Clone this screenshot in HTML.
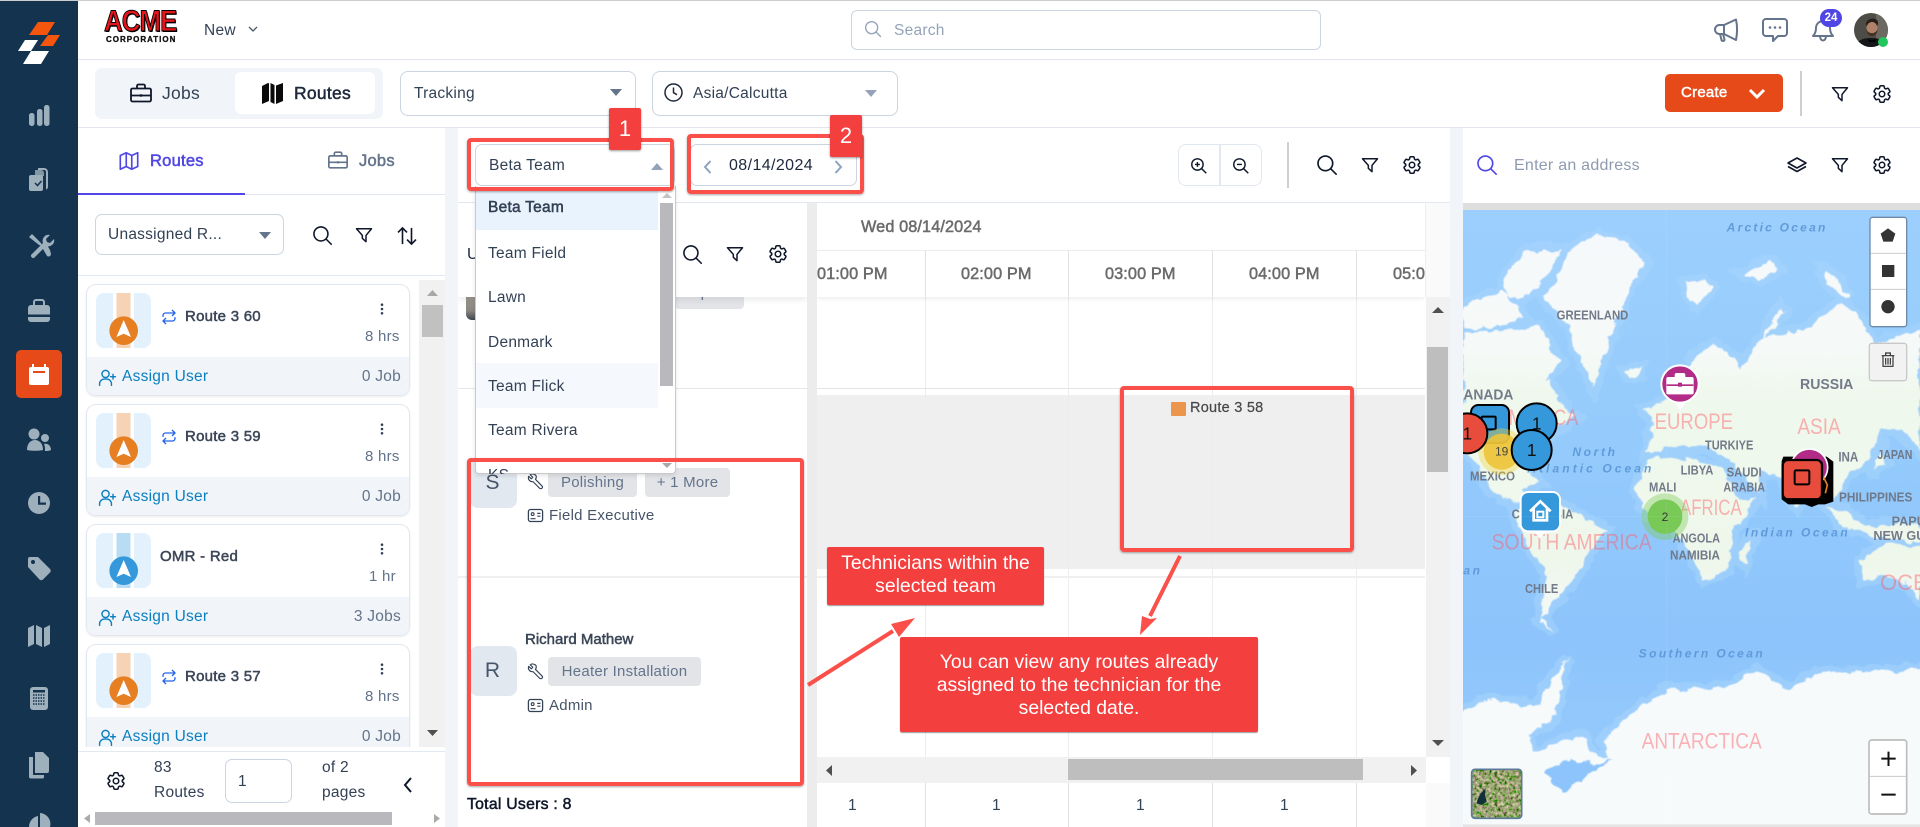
<!DOCTYPE html>
<html lang="en"><head><meta charset="utf-8"><title>Schedule</title>
<style>
*{box-sizing:border-box}
html,body{margin:0;padding:0;width:1920px;height:827px;overflow:hidden;background:#fff;font-family:"Liberation Sans",sans-serif;color:#334155}
.a{position:absolute}
.t{position:absolute;white-space:nowrap;line-height:20px;height:20px;letter-spacing:.25px;transform:translateY(1px)}
.t2{transform:translateY(2px)}
.m{font-weight:400;-webkit-text-stroke:.5px currentColor}
.ln{position:absolute;background:#e2e8f0}
svg.i{position:absolute;overflow:visible}
.card{position:absolute;left:86px;width:324px;height:112px;background:#fff;border:1px solid #e2e8f0;border-radius:10px;box-shadow:0 1px 2px rgba(0,0,0,.08);overflow:hidden}
.card .bar{position:absolute;left:0;right:0;top:72px;height:40px;background:#f1f4f9}
.name{font-size:15px;color:#3b4657}
.sb{fill:#9fb0bd}
.chip{position:absolute;background:#e2e4e8;border-radius:4px;height:29px;line-height:30px;font-size:15px;color:#64748b;text-align:center;letter-spacing:.25px;white-space:nowrap}
.dd{position:absolute;left:488px;font-size:15.5px;color:#334155;line-height:20px;white-space:nowrap;letter-spacing:.25px;transform:translateY(1px)}
.rr{position:absolute;border:4px solid #fb4f49;border-radius:4px;box-shadow:0 1px 2px rgba(0,0,0,.35);z-index:20}
.bd{position:absolute;background:#f43f3f;border-radius:2px;box-shadow:0 1px 2px rgba(0,0,0,.4);color:#fff;font-size:22px;text-align:center;line-height:42px;width:32px;height:42px;z-index:21}
.call{position:absolute;background:#f43f3f;border-radius:2px;box-shadow:0 1px 1px rgba(0,0,0,.4);color:#fff;font-size:19.4px;line-height:23px;text-align:center;z-index:21;white-space:nowrap}
</style></head>
<body>
<svg width="0" height="0" style="position:absolute">
<defs>
<symbol id="gear" viewBox="0 0 24 24"><path fill="none" stroke="currentColor" stroke-width="1.7" stroke-linejoin="round" d="M9.594 3.94c.09-.542.56-.94 1.11-.94h2.593c.55 0 1.02.398 1.11.94l.213 1.281c.063.374.313.686.645.87.074.04.147.083.22.127.325.196.72.257 1.075.124l1.217-.456a1.125 1.125 0 0 1 1.37.49l1.296 2.247a1.125 1.125 0 0 1-.26 1.431l-1.003.827c-.293.241-.438.613-.43.992a7.723 7.723 0 0 1 0 .255c-.008.378.137.75.43.991l1.004.827c.424.35.534.955.26 1.43l-1.298 2.247a1.125 1.125 0 0 1-1.369.491l-1.217-.456c-.355-.133-.75-.072-1.076.124a6.47 6.47 0 0 1-.22.128c-.331.183-.581.495-.644.869l-.213 1.281c-.09.543-.56.94-1.11.94h-2.594c-.55 0-1.019-.398-1.11-.94l-.213-1.281c-.062-.374-.312-.686-.644-.87a6.52 6.52 0 0 1-.22-.127c-.325-.196-.72-.257-1.076-.124l-1.217.456a1.125 1.125 0 0 1-1.369-.49l-1.297-2.247a1.125 1.125 0 0 1 .26-1.431l1.004-.827c.292-.24.437-.613.43-.991a6.932 6.932 0 0 1 0-.255c.007-.38-.138-.751-.43-.992l-1.004-.827a1.125 1.125 0 0 1-.26-1.43l1.297-2.247a1.125 1.125 0 0 1 1.37-.491l1.216.456c.356.133.751.072 1.076-.124.072-.044.146-.086.22-.128.332-.183.582-.495.644-.869l.214-1.28Z"/><circle cx="12" cy="12" r="3" fill="none" stroke="currentColor" stroke-width="1.7"/></symbol>
<symbol id="filter" viewBox="0 0 24 24"><path fill="none" stroke="currentColor" stroke-width="1.8" stroke-linejoin="round" d="M3 4.5h18l-6.600 8v7.500l-4.400-4v-3.500z"/></symbol>
<symbol id="search" viewBox="0 0 24 24"><circle cx="10.200" cy="10.200" r="8" fill="none" stroke="currentColor" stroke-width="1.8"/><path d="M16 16l6 6" stroke="currentColor" stroke-width="1.800" fill="none" stroke-linecap="round"/></symbol>
<symbol id="brief" viewBox="0 0 24 24"><path fill="none" stroke="currentColor" stroke-width="1.800" stroke-linejoin="round" d="M3.500 7.500h17a1.500 1.500 0 0 1 1.500 1.500v10a1.500 1.500 0 0 1-1.500 1.500h-17A1.500 1.500 0 0 1 2 19V9a1.500 1.500 0 0 1 1.500-1.500zM8 7.500V5a1.500 1.500 0 0 1 1.500-1.500h5A1.500 1.500 0 0 1 16 5v2.500M2 14.500h20"/><rect x="10.800" y="13.300" width="2.400" height="2.400" fill="currentColor"/></symbol>
<symbol id="map" viewBox="0 0 24 24"><path fill="none" stroke="currentColor" stroke-width="1.800" stroke-linejoin="round" d="M2.500 6l6.500-3 6 3 6.500-3v15l-6.500 3-6-3-6.500 3zM9 3v15M15 6v15"/></symbol>
<symbol id="wrench" viewBox="0 0 24 24"><path fill="none" stroke="#334155" stroke-width="1.600" stroke-linejoin="round" d="M11 2.500a5.500 5.500 0 0 0-6.500 0l3.700 3.500-2.200 2.300L2.400 4.700a5.500 5.500 0 0 0 6.100 7.500l9.300 9.300c1 .9 2.500.9 3.300 0 .9-.9.9-2.300 0-3.200l-9.200-9.400a5.500 5.500 0 0 0 .1-6.400z"/></symbol>
<symbol id="idc" viewBox="0 0 24 24"><rect x="2" y="3.500" width="20" height="17" rx="3" fill="none" stroke="#334155" stroke-width="1.800"/><circle cx="8" cy="10" r="2" fill="none" stroke="#334155" stroke-width="1.500"/><path d="M5 16.500h7M14.500 9h4.500M14.500 13h4.500" stroke="#334155" stroke-width="1.600" fill="none"/></symbol>
<symbol id="thO" viewBox="0 0 55 55"><rect width="55" height="55" rx="8" fill="#e3f1fc"/><rect x="17" width="21" height="55" fill="#fff"/><rect x="20.500" width="14" height="55" fill="#f6d3b5"/><circle cx="27.700" cy="37.700" r="14.300" fill="#e67e22"/><path d="M27.700 27l7.300 17-7.300-3.300-7.300 3.300z" fill="#fff"/></symbol>
<symbol id="thB" viewBox="0 0 55 55"><rect width="55" height="55" rx="8" fill="#e3f1fc"/><rect x="17" width="21" height="55" fill="#fff"/><rect x="20.500" width="14" height="55" fill="#b7dcf3"/><circle cx="27.700" cy="37.700" r="14.300" fill="#3498db"/><path d="M27.700 27l7.300 17-7.300-3.300-7.300 3.300z" fill="#fff"/></symbol>
<symbol id="rep" viewBox="0 0 24 24"><path fill="none" stroke="#2563eb" stroke-width="2" stroke-linecap="round" stroke-linejoin="round" d="M17 2l4 4-4 4M21 6H7a4 4 0 0 0-4 4v1M7 22l-4-4 4-4M3 18h14a4 4 0 0 0 4-4v-1"/></symbol>
<symbol id="usr" viewBox="0 0 24 24"><circle cx="9.500" cy="7.500" r="4.500" fill="none" stroke="#0b7fc0" stroke-width="1.800"/><path d="M2 22v-2a6 6 0 0 1 6-6h3a6 6 0 0 1 6 6v2M19 8v6M16 11h6" fill="none" stroke="#0b7fc0" stroke-width="1.800" stroke-linecap="round"/></symbol>
<symbol id="dots" viewBox="0 0 4 14"><circle cx="2" cy="2" r="1.500" fill="#334155"/><circle cx="2" cy="7" r="1.500" fill="#334155"/><circle cx="2" cy="12" r="1.500" fill="#334155"/></symbol>
</defs></svg>

<!-- top hairline -->
<div class="a" style="left:0;top:0;width:1920px;height:1px;background:#ccc;z-index:50"></div>

<!-- sidebar -->
<div class="a" style="left:0;top:0;width:78px;height:827px;background:#13334e;overflow:hidden">
<svg class="i" style="left:0;top:0" width="78" height="827">
<path d="M29 35l9-13h17l-8 13z" fill="#f4560d"/><path d="M40 46l8-11h12l-7 11z" fill="#f4560d"/>
<path d="M18 51l7-11h13l-7 11z" fill="#fff"/><path d="M23 64l8-13h18l-8 13z" fill="#fff"/>
<g class="sb">
<rect x="29" y="113" width="5.500" height="13" rx="2.500"/><rect x="37" y="109" width="5.500" height="17" rx="2.500"/><rect x="44" y="105" width="5.500" height="21" rx="2.500"/>
<path d="M38 168h6a4 4 0 0 1 4 4v15a3 3 0 0 1-2 2.500V172a2 2 0 0 0-2-2h-6z"/><path d="M35 170h6a3 3 0 0 1 3 3v3h-9z" opacity=".8"/><rect x="29" y="175" width="14" height="16" rx="2"/>
<path d="M29 237l3-3 9 9 1 3-3-1-10-8zM31 255l12-12a6 6 0 0 1 7-8l-4 4 1 3 3 1 4-4a6 6 0 0 1-8 7l-12 12a2.500 2.500 0 0 1-3-3zM43 249l4-4 3 5 1 4a2.500 2.500 0 0 1-4 2z"/>
<path d="M33 305v-3a3 3 0 0 1 3-3h6a3 3 0 0 1 3 3v3h-2v-3a1 1 0 0 0-1-1h-6a1 1 0 0 0-1 1v3z"/><path d="M31 305h16a3 3 0 0 1 3 3v7H28v-7a3 3 0 0 1 3-3z"/><path d="M28 317h22v2a3 3 0 0 1-3 3H31a3 3 0 0 1-3-3z"/>
<circle cx="34" cy="434" r="5.500"/><circle cx="45" cy="438" r="4"/><path d="M27 450c0-7 4-10 8-10s8 3 8 10c-5 1-11 1-16 0z"/><path d="M44 444c4-1 7 2 7 6-2 1-4 1-6 1 0-3 0-5-1-7z"/>
<circle cx="39" cy="503" r="11"/>
<path d="M28 559a2 2 0 0 1 2-2h8l12 12a2.500 2.500 0 0 1 0 3.500l-7 7a2.500 2.500 0 0 1-3.500 0L28 567z"/>
<path d="M28 628l6-3v19l-6 3zM36 625l6 3v19l-6-3zM44 628l6-3v19l-6 3z"/>
<rect x="30" y="687" width="18" height="23" rx="3"/>
<path d="M35 752h8l6 6v13a2 2 0 0 1-2 2H35zM29 757h4v18h11v2a1.500 1.500 0 0 1-1.500 1.500H31a2 2 0 0 1-2-2z"/>
<path d="M29 827a11 11 0 0 1 9-11v11zM40 813a11 11 0 0 1 10 14H40z"/>
</g>
<g fill="#13334e"><path d="M35 183l2.500 2.500 4-4.500" stroke="#13334e" stroke-width="1.500" fill="none"/><path d="M38 496h2.200v6.500H46v2.200h-8z"/><circle cx="33" cy="562" r="2"/><rect x="28" y="314.500" width="22" height="1.500"/><rect x="33" y="690" width="12" height="2.500"/>
<path d="M33 695h12M33 698h12M33 701h12M33 704h12" stroke="#13334e" stroke-width="1.500" stroke-dasharray="1.500 1"/></g>
<rect x="16" y="350" width="46" height="48" rx="5" fill="#e64a19"/>
<path d="M32 367v-3h2v3h10v-3h2v3h1a2 2 0 0 1 2 2v14a2 2 0 0 1-2 2H31a2 2 0 0 1-2-2v-14a2 2 0 0 1 2-2z" fill="#fff"/><rect x="33" y="371" width="12" height="2" fill="#e64a19"/>
</svg>
</div>

<!-- header -->
<div class="ln" style="left:78px;top:59px;width:1842px;height:1px;background:#e2e6ec"></div>
<div class="a" style="left:104px;top:6px;width:85px;font-weight:bold;font-size:30px;letter-spacing:-1px;color:#e8141c;line-height:32px;-webkit-text-stroke:1px #000;text-shadow:1px 1px 0 #000;transform:scaleX(.86);transform-origin:0 0;white-space:nowrap">ACME</div>
<div class="a" style="left:106px;top:35px;font-weight:bold;font-size:8px;letter-spacing:1px;-webkit-text-stroke:.3px #111;color:#111;line-height:10px;white-space:nowrap">CORPORATION</div>
<div class="t" style="left:204px;top:20px;font-size:15.500px;color:#334155">New</div>
<svg class="i" style="left:248px;top:26px" width="10" height="6"><path d="M1 1l4 4 4-4" fill="none" stroke="#475569" stroke-width="1.300"/></svg>
<div class="a" style="left:851px;top:10px;width:470px;height:40px;border:1px solid #cbd5e1;border-radius:6px"></div>
<svg class="i" style="left:864px;top:20px;color:#94a3b8" width="18" height="18"><use href="#search"/></svg>
<div class="t t2" style="left:894px;top:19px;font-size:15.500px;color:#94a3b8">Search</div>
<svg class="i" style="left:1714px;top:17px" width="26" height="26" viewBox="0 0 26 26"><path d="M10 8H5.500a4.500 4.500 0 0 0 0 9H10zM10 8l12-5.500c1.300 6 1.300 14 0 20.500L10 17M6 17l1.500 6c.5 1.500 3.500 1 3-.5L9 17" fill="none" stroke="#64748b" stroke-width="2" stroke-linejoin="round"/></svg>
<svg class="i" style="left:1761px;top:17px" width="28" height="26" viewBox="0 0 28 26"><path d="M5 2h18a3 3 0 0 1 3 3v11a3 3 0 0 1-3 3h-6l-5 5v-5H5a3 3 0 0 1-3-3V5a3 3 0 0 1 3-3z" fill="none" stroke="#64748b" stroke-width="2" stroke-linejoin="round"/><circle cx="9" cy="10.500" r="1.300" fill="#64748b"/><circle cx="14" cy="10.500" r="1.300" fill="#64748b"/><circle cx="19" cy="10.500" r="1.300" fill="#64748b"/></svg>
<svg class="i" style="left:1811px;top:17px" width="24" height="26" viewBox="0 0 24 26"><path d="M2 19c2-2 3-4 3-8a7 7 0 0 1 14 0c0 4 1 6 3 8zM9 19c0 6 6 6 6 0" fill="none" stroke="#64748b" stroke-width="2" stroke-linejoin="round"/></svg>
<div class="a" style="left:1820px;top:9px;width:22px;height:18px;border-radius:9px;background:#4f46e5;color:#fff;font-size:11.500px;font-weight:bold;text-align:center;line-height:18px">24</div>
<svg class="i" style="left:1854px;top:13px" width="34" height="34" viewBox="0 0 34 34"><defs><clipPath id="cav"><circle cx="17" cy="17" r="17"/></clipPath></defs><g clip-path="url(#cav)"><rect width="34" height="34" fill="#4e4c46"/><rect x="22" width="12" height="34" fill="#6b6961"/><path d="M2 34c1-7 7-9 15-9s14 2 15 9z" fill="#14161a"/><ellipse cx="18" cy="14.500" rx="5.500" ry="7.500" fill="#b08068"/><path d="M12 12c-1-7 12-9 12-2 0 2-.5 2-1 3-1-3-3-4-5-4s-4 1-5 4z" fill="#2a1e18"/><path d="M12.500 16c1 5 9 6 11 0 0 4-2 7-5.500 7s-5.500-3-5.500-7z" fill="#43301f"/><path d="M14 26l4 1.500 4-1.500-1 3h-6z" fill="#000"/></g></svg>
<div class="a" style="left:1878px;top:37px;width:10px;height:10px;border-radius:50%;background:#22c55e"></div>

<!-- sub-header -->
<div class="ln" style="left:78px;top:127px;width:1842px;height:1px;background:#e2e6ec"></div>
<div class="a" style="left:95px;top:68px;width:288px;height:51px;background:#f1f4f9;border-radius:7px"></div>
<div class="a" style="left:235px;top:72px;width:140px;height:42px;background:#fff;border-radius:6px"></div>
<svg class="i" style="left:129px;top:81px;color:#0f172a" width="24" height="24"><use href="#brief"/></svg>
<div class="t" style="left:162px;top:82px;font-size:17.500px;color:#334155">Jobs</div>
<svg class="i" style="left:262px;top:83px" width="21" height="21" viewBox="0 0 21 21"><path d="M0 3l6-3 1 .3V18l-7 3zM8.500 0l4 2v19l-4-2zM14 2.500L21 0v18l-7 3z" fill="#0a0a0a"/></svg>
<div class="t m" style="left:294px;top:82px;font-size:17.500px;color:#1e293b">Routes</div>
<div class="a" style="left:400px;top:71px;width:236px;height:45px;border:1px solid #cbd5e1;border-radius:8px"></div>
<div class="t t2" style="left:414px;top:82px;font-size:15.500px;color:#334155">Tracking</div>
<svg class="i" style="left:610px;top:89px" width="12" height="7"><path d="M0 0h12L6 7z" fill="#64748b"/></svg>
<div class="a" style="left:652px;top:71px;width:246px;height:45px;border:1px solid #cbd5e1;border-radius:8px"></div>
<svg class="i" style="left:664px;top:83px" width="19" height="19" viewBox="0 0 19 19"><circle cx="9.500" cy="9.500" r="8.500" fill="none" stroke="#1e293b" stroke-width="1.500"/><path d="M9.500 4.500v5.200l3.500 2" fill="none" stroke="#1e293b" stroke-width="1.500"/></svg>
<div class="t t2" style="left:693px;top:82px;font-size:15.500px;color:#334155">Asia/Calcutta</div>
<svg class="i" style="left:865px;top:90px" width="12" height="7"><path d="M0 0h12L6 7z" fill="#94a3b8"/></svg>
<div class="a" style="left:1665px;top:74px;width:118px;height:38px;background:#e64a19;border-radius:5px"></div>
<div class="t m" style="left:1681px;top:82px;font-size:15px;color:#fff">Create</div>
<svg class="i" style="left:1748px;top:88px" width="18" height="12"><path d="M2 2l7 7 7-7" fill="none" stroke="#fff" stroke-width="3"/></svg>
<div class="ln" style="left:1800px;top:71px;width:2px;height:45px;background:#cfcfcf"></div>
<svg class="i" style="left:1830px;top:84px;color:#0f172a" width="20" height="20"><use href="#filter"/></svg>
<svg class="i" style="left:1871px;top:83px;color:#0f172a" width="22" height="22"><use href="#gear"/></svg>

<!-- gutters -->
<div class="a" style="left:445px;top:128px;width:13px;height:699px;background:#f1f5f9"></div>
<div class="a" style="left:1450px;top:128px;width:13px;height:699px;background:#f1f5f9"></div>

<!-- left panel -->
<svg class="i" style="left:118px;top:150px;color:#4f46e5" width="22" height="22"><use href="#map"/></svg>
<div class="t m" style="left:150px;top:150px;font-size:16.500px;color:#4f46e5">Routes</div>
<svg class="i" style="left:327px;top:149px;color:#64748b" width="22" height="22"><use href="#brief"/></svg>
<div class="t m" style="left:359px;top:150px;font-size:16.500px;color:#64748b">Jobs</div>
<div class="ln" style="left:78px;top:194px;width:367px;height:1px"></div>
<div class="ln" style="left:78px;top:193px;width:167px;height:2px;background:#4f46e5"></div>
<div class="a" style="left:95px;top:214px;width:189px;height:41px;border:1px solid #cbd5e1;border-radius:7px"></div>
<div class="t" style="left:108px;top:224px;font-size:15.500px;color:#334155">Unassigned R...</div>
<svg class="i" style="left:259px;top:232px" width="12" height="7"><path d="M0 0h12L6 7z" fill="#64748b"/></svg>
<svg class="i" style="left:312px;top:225px;color:#0f172a" width="21" height="21"><use href="#search"/></svg>
<svg class="i" style="left:354px;top:225px;color:#0f172a" width="20" height="20"><use href="#filter"/></svg>
<svg class="i" style="left:397px;top:227px" width="20" height="18" viewBox="0 0 22 20"><path d="M6 19V1M1 6l5-5 5 5M16 1v18M11 14l5 5 5-5" fill="none" stroke="#0f172a" stroke-width="1.800"/></svg>
<div class="ln" style="left:78px;top:275px;width:367px;height:1px"></div>

<div class="a" style="left:419px;top:280px;width:26px;height:467px;background:#f1f1f1"></div>
<div class="a" style="left:422px;top:305px;width:21px;height:32px;background:#c1c1c1"></div>
<svg class="i" style="left:427px;top:290px" width="11" height="6"><path d="M0 6h11L5.500 0z" fill="#a8a8a8"/></svg>
<svg class="i" style="left:427px;top:730px" width="11" height="6"><path d="M0 0h11L5.500 6z" fill="#505050"/></svg>

<div class="a" style="left:78px;top:276px;width:341px;height:471px;overflow:hidden">
 <div class="card" style="left:8px;top:8px"><svg class="i" style="left:9px;top:8px" width="55" height="55"><use href="#thO"/></svg><svg class="i" style="left:74px;top:24px" width="16" height="16"><use href="#rep"/></svg><div class="t name m" style="left:98px;top:21px">Route 3 60</div><svg class="i" style="left:293px;top:18px" width="4" height="12"><use href="#dots"/></svg><div class="t" style="left:278px;top:41px;font-size:15px;color:#64748b">8 hrs</div><div class="bar"></div><svg class="i" style="left:11px;top:83px" width="19" height="19"><use href="#usr"/></svg><div class="t" style="left:35px;top:81px;font-size:15.500px;color:#0b7fc0">Assign User</div><div class="t" style="right:8px;top:81px;font-size:15.500px;color:#64748b">0 Job</div></div>
 <div class="card" style="left:8px;top:128px"><svg class="i" style="left:9px;top:8px" width="55" height="55"><use href="#thO"/></svg><svg class="i" style="left:74px;top:24px" width="16" height="16"><use href="#rep"/></svg><div class="t name m" style="left:98px;top:21px">Route 3 59</div><svg class="i" style="left:293px;top:18px" width="4" height="12"><use href="#dots"/></svg><div class="t" style="left:278px;top:41px;font-size:15px;color:#64748b">8 hrs</div><div class="bar"></div><svg class="i" style="left:11px;top:83px" width="19" height="19"><use href="#usr"/></svg><div class="t" style="left:35px;top:81px;font-size:15.500px;color:#0b7fc0">Assign User</div><div class="t" style="right:8px;top:81px;font-size:15.500px;color:#64748b">0 Job</div></div>
 <div class="card" style="left:8px;top:248px"><svg class="i" style="left:9px;top:8px" width="55" height="55"><use href="#thB"/></svg><div class="t name m" style="left:73px;top:21px">OMR - Red</div><svg class="i" style="left:293px;top:18px" width="4" height="12"><use href="#dots"/></svg><div class="t" style="left:282px;top:41px;font-size:15px;color:#64748b">1 hr</div><div class="bar"></div><svg class="i" style="left:11px;top:83px" width="19" height="19"><use href="#usr"/></svg><div class="t" style="left:35px;top:81px;font-size:15.500px;color:#0b7fc0">Assign User</div><div class="t" style="right:8px;top:81px;font-size:15.500px;color:#64748b">3 Jobs</div></div>
 <div class="card" style="left:8px;top:368px"><svg class="i" style="left:9px;top:8px" width="55" height="55"><use href="#thO"/></svg><svg class="i" style="left:74px;top:24px" width="16" height="16"><use href="#rep"/></svg><div class="t name m" style="left:98px;top:21px">Route 3 57</div><svg class="i" style="left:293px;top:18px" width="4" height="12"><use href="#dots"/></svg><div class="t" style="left:278px;top:41px;font-size:15px;color:#64748b">8 hrs</div><div class="bar"></div><svg class="i" style="left:11px;top:83px" width="19" height="19"><use href="#usr"/></svg><div class="t" style="left:35px;top:81px;font-size:15.500px;color:#0b7fc0">Assign User</div><div class="t" style="right:8px;top:81px;font-size:15.500px;color:#64748b">0 Job</div></div>
</div>
<div class="ln" style="left:78px;top:751px;width:367px;height:1px"></div>
<svg class="i" style="left:105px;top:770px;color:#0f172a" width="22" height="22"><use href="#gear"/></svg>
<div class="t" style="left:154px;top:757px;font-size:15.500px;color:#334155">83</div>
<div class="t" style="left:154px;top:782px;font-size:15.500px;color:#334155">Routes</div>
<div class="a" style="left:225px;top:759px;width:67px;height:44px;border:1px solid #cbd5e1;border-radius:7px"></div>
<div class="t" style="left:238px;top:771px;font-size:15.500px;color:#334155">1</div>
<div class="t" style="left:322px;top:757px;font-size:15.500px;color:#334155">of 2</div>
<div class="t" style="left:322px;top:782px;font-size:15.500px;color:#334155">pages</div>
<svg class="i" style="left:403px;top:777px" width="10" height="16"><path d="M8 1L2 8l6 7" fill="none" stroke="#0f172a" stroke-width="2"/></svg>
<div class="a" style="left:95px;top:812px;width:297px;height:13px;background:#b8b8bd"></div>
<svg class="i" style="left:84px;top:814px" width="6" height="9"><path d="M6 0v9L0 4.500z" fill="#aaa"/></svg>
<svg class="i" style="left:434px;top:814px" width="6" height="9"><path d="M0 0v9l6-4.500z" fill="#aaa"/></svg>

<!-- main toolbar -->
<div class="a" style="left:475px;top:144px;width:200px;height:42px;border:1px solid #cbd5e1;border-radius:7px;background:#fff"></div>
<div class="t" style="left:489px;top:155px;font-size:15.500px;color:#334155">Beta Team</div>
<svg class="i" style="left:651px;top:163px" width="12" height="7"><path d="M0 7h12L6 0z" fill="#94a3b8"/></svg>
<div class="a" style="left:690px;top:144px;width:167px;height:42px;border:1px solid #cbd5e1;border-radius:7px"></div>
<svg class="i" style="left:703px;top:160px" width="9" height="14"><path d="M7.500 1L2 7l5.500 6" fill="none" stroke="#8ba3c0" stroke-width="2"/></svg>
<div class="t" style="left:729px;top:155px;font-size:16px;letter-spacing:.4px;color:#1e293b">08/14/2024</div>
<svg class="i" style="left:834px;top:160px" width="9" height="14"><path d="M1.500 1L7 7l-5.500 6" fill="none" stroke="#8ba3c0" stroke-width="2"/></svg>
<div class="a" style="left:1178px;top:144px;width:84px;height:42px;border:1px solid #e2e8f0;border-radius:8px"></div>
<div class="ln" style="left:1219px;top:144px;width:2px;height:42px"></div>
<svg class="i" style="left:1190px;top:157px;color:#0f172a" width="17" height="17" viewBox="0 0 24 24"><circle cx="10.500" cy="10.500" r="8" fill="none" stroke="#0f172a" stroke-width="2"/><path d="M16.500 16.500L23 23M10.500 7v7M7 10.500h7" stroke="#0f172a" stroke-width="2" fill="none"/></svg>
<svg class="i" style="left:1232px;top:157px" width="17" height="17" viewBox="0 0 24 24"><circle cx="10.500" cy="10.500" r="8" fill="none" stroke="#0f172a" stroke-width="2"/><path d="M16.500 16.500L23 23M7 10.500h7" stroke="#0f172a" stroke-width="2" fill="none"/></svg>
<div class="ln" style="left:1287px;top:142px;width:2px;height:46px;background:#cfcfcf"></div>
<svg class="i" style="left:1316px;top:154px;color:#0f172a" width="22" height="22"><use href="#search"/></svg>
<svg class="i" style="left:1360px;top:155px;color:#0f172a" width="20" height="20"><use href="#filter"/></svg>
<svg class="i" style="left:1401px;top:154px;color:#0f172a" width="22" height="22"><use href="#gear"/></svg>
<div class="ln" style="left:458px;top:202px;width:992px;height:1px"></div>

<!-- left table -->
<div class="a" style="left:675px;top:297px;width:69px;height:12px;background:#e2e4e8;border-radius:0 0 4px 4px;overflow:hidden"></div>
<div class="a" style="left:676px;top:297px;width:60px;height:6px;overflow:hidden"><div style="position:absolute;left:-7px;top:-14px;font-size:15px;line-height:20px;color:#64748b;white-space:nowrap">Complete</div></div>
<div class="a" style="left:466px;top:297px;width:14px;height:23px;background:linear-gradient(#9b978d,#8a8780 60%,#40464e);border-radius:0 0 0 6px"></div>
<div class="a" style="left:458px;top:203px;width:349px;height:94px;background:#fff;clip-path:inset(0 0 -8px 0);box-shadow:0 3px 6px rgba(0,0,0,.08)"></div>
<div class="t" style="left:467px;top:244px;font-size:16px;color:#1e293b">Users</div>
<svg class="i" style="left:682px;top:244px;color:#0f172a" width="21" height="21"><use href="#search"/></svg>
<svg class="i" style="left:725px;top:244px;color:#0f172a" width="20" height="20"><use href="#filter"/></svg>
<svg class="i" style="left:767px;top:243px;color:#0f172a" width="22" height="22"><use href="#gear"/></svg>
<div class="ln" style="left:458px;top:388px;width:349px;height:1px;background:#e6e6e6"></div>
<div class="ln" style="left:458px;top:576px;width:349px;height:2px;background:#f0f0f0"></div>
<div class="a" style="left:470px;top:458px;width:47px;height:50px;background:#e2e8f0;border-radius:0 0 8px 8px;font-size:21px;color:#475569;text-align:center;line-height:50px;padding-right:2px">S</div>
<svg class="i" style="left:527px;top:473px" width="17" height="17"><use href="#wrench"/></svg>
<div class="chip" style="left:548px;top:468px;width:89px">Polishing</div>
<div class="chip" style="left:645px;top:468px;width:85px">+ 1 More</div>
<svg class="i" style="left:527px;top:507px" width="17" height="17"><use href="#idc"/></svg>
<div class="t" style="left:549px;top:505px;font-size:15px;color:#475569">Field Executive</div>
<div class="t m" style="left:525px;top:629px;font-size:15px;letter-spacing:0;color:#3b4657">Richard Mathew</div>
<div class="a" style="left:470px;top:646px;width:47px;height:50px;background:#e2e8f0;border-radius:8px;font-size:21px;color:#475569;text-align:center;line-height:50px;padding-right:2px">R</div>
<svg class="i" style="left:527px;top:663px" width="17" height="17"><use href="#wrench"/></svg>
<div class="chip" style="left:548px;top:657px;width:153px">Heater Installation</div>
<svg class="i" style="left:527px;top:697px" width="17" height="17"><use href="#idc"/></svg>
<div class="t" style="left:549px;top:695px;font-size:15px;color:#475569">Admin</div>
<div class="t t2 m" style="left:467px;top:793px;font-size:15.800px;color:#0f172a">Total Users : 8</div>

<div class="a" style="left:807px;top:203px;width:10px;height:624px;background:#ececec"></div>

<!-- calendar -->
<div class="a" style="left:817px;top:203px;width:608px;height:554px;overflow:hidden;background:#fff">
 <div class="a" style="left:0;top:192px;width:608px;height:174px;background:#efefef"></div>
 <div class="a" style="left:108px;top:47px;width:1px;height:507px;background:#ededed"></div>
 <div class="a" style="left:251px;top:47px;width:1px;height:507px;background:#ededed"></div>
 <div class="a" style="left:395px;top:47px;width:1px;height:507px;background:#ededed"></div>
 <div class="a" style="left:539px;top:47px;width:1px;height:507px;background:#ededed"></div>
 <div class="a" style="left:0;top:185px;width:608px;height:1px;background:#e4e4e4"></div>
 <div class="a" style="left:0;top:373px;width:608px;height:2px;background:#f0f0f0"></div>
 <div class="a" style="left:0;top:47px;width:608px;height:47px;background:#fff;box-shadow:0 2px 4px rgba(0,0,0,.07);border-top:1px solid #ededed"></div>
 <div class="a" style="left:108px;top:47px;width:1px;height:47px;background:#e2e2e2"></div>
 <div class="a" style="left:251px;top:47px;width:1px;height:47px;background:#e2e2e2"></div>
 <div class="a" style="left:395px;top:47px;width:1px;height:47px;background:#e2e2e2"></div>
 <div class="a" style="left:539px;top:47px;width:1px;height:47px;background:#e2e2e2"></div>
 <div class="t m" style="left:44px;top:13px;font-size:16.300px;letter-spacing:.1px;color:#6b6b6b">Wed 08/14/2024</div>
 <div class="t m" style="left:0;top:60px;font-size:16.300px;letter-spacing:.1px;color:#6b6b6b">01:00 PM</div>
 <div class="t m" style="left:144px;top:60px;font-size:16.300px;letter-spacing:.1px;color:#6b6b6b">02:00 PM</div>
 <div class="t m" style="left:288px;top:60px;font-size:16.300px;letter-spacing:.1px;color:#6b6b6b">03:00 PM</div>
 <div class="t m" style="left:432px;top:60px;font-size:16.300px;letter-spacing:.1px;color:#6b6b6b">04:00 PM</div>
 <div class="t m" style="left:576px;top:60px;font-size:16.300px;letter-spacing:.1px;color:#6b6b6b">05:00 PM</div>
 <div class="a" style="left:354px;top:199px;width:15px;height:14px;background:#ec954c;border-radius:1px"></div>
 <div class="t" style="left:373px;top:194px;font-size:14.500px;color:#474747;-webkit-text-stroke:.2px #474747">Route 3 58</div>
</div>
<div class="a" style="left:1425px;top:203px;width:25px;height:94px;background:#fafafa;border-left:1px solid #eee"></div>
<div class="a" style="left:1426px;top:297px;width:24px;height:460px;background:#f1f1f1"></div>
<div class="a" style="left:1427px;top:347px;width:21px;height:125px;background:#bebebe"></div>
<svg class="i" style="left:1432px;top:307px" width="12" height="6"><path d="M0 6h12L6 0z" fill="#505050"/></svg>
<svg class="i" style="left:1432px;top:740px" width="12" height="6"><path d="M0 0h12L6 6z" fill="#505050"/></svg>
<div class="a" style="left:817px;top:757px;width:609px;height:26px;background:#f1f1f1"></div>
<div class="a" style="left:1068px;top:759px;width:295px;height:21px;background:#bebebe"></div>
<svg class="i" style="left:826px;top:765px" width="6" height="11"><path d="M6 0v11L0 5.500z" fill="#505050"/></svg>
<svg class="i" style="left:1411px;top:765px" width="6" height="11"><path d="M0 0v11l6-5.500z" fill="#505050"/></svg>
<div class="ln" style="left:925px;top:783px;width:1px;height:44px;background:#e2e2e2"></div>
<div class="ln" style="left:1068px;top:783px;width:1px;height:44px;background:#e2e2e2"></div>
<div class="ln" style="left:1212px;top:783px;width:1px;height:44px;background:#e2e2e2"></div>
<div class="ln" style="left:1356px;top:783px;width:1px;height:44px;background:#e2e2e2"></div>
<div class="ln" style="left:1426px;top:783px;width:24px;height:44px;background:#fafafa"></div>
<div class="t" style="left:848px;top:795px;font-size:15.500px;color:#334155">1</div>
<div class="t" style="left:992px;top:795px;font-size:15.500px;color:#334155">1</div>
<div class="t" style="left:1136px;top:795px;font-size:15.500px;color:#334155">1</div>
<div class="t" style="left:1280px;top:795px;font-size:15.500px;color:#334155">1</div>

<!-- dropdown -->
<div class="a" style="left:475px;top:186px;width:201px;height:288px;background:#fff;border:1px solid #c9c9c9;border-top:none;border-radius:0 0 4px 4px;box-shadow:0 2px 4px rgba(0,0,0,.1);overflow:hidden;z-index:10"></div>
<div class="a" style="left:476px;top:190px;width:182px;height:40px;background:#e9f3fd;z-index:11"></div>
<div class="a" style="left:476px;top:363px;width:182px;height:45px;background:#f5f9fe;z-index:11"></div>
<div class="a" style="left:660px;top:203px;width:13px;height:183px;background:#b8b8bd;z-index:11"></div>
<svg class="i" style="left:662px;top:193px;z-index:11" width="10" height="5"><path d="M0 5h10L5 0z" fill="#c4c4c4"/></svg>
<svg class="i" style="left:662px;top:463px;z-index:11" width="10" height="5"><path d="M0 0h10L5 5z" fill="#a8a8a8"/></svg>
<div class="dd m" style="top:197px;z-index:12">Beta Team</div>
<div class="dd" style="top:243px;z-index:12">Team Field</div>
<div class="dd" style="top:287px;z-index:12">Lawn</div>
<div class="dd" style="top:332px;z-index:12">Denmark</div>
<div class="dd" style="top:376px;z-index:12">Team Flick</div>
<div class="dd" style="top:420px;z-index:12">Team Rivera</div>
<div class="a" style="left:476px;top:464px;width:180px;height:10px;overflow:hidden;z-index:12"><div class="dd" style="left:12px;top:1px">KS</div></div>

<!-- annotations -->
<div class="rr" style="left:467px;top:138px;width:207px;height:53px"></div>
<div class="rr" style="left:687px;top:134px;width:177px;height:60px"></div>
<div class="rr" style="left:467px;top:458px;width:337px;height:328px"></div>
<div class="rr" style="left:1120px;top:386px;width:234px;height:166px"></div>
<div class="bd" style="left:609px;top:108px">1</div>
<div class="bd" style="left:830px;top:115px">2</div>
<div class="call" style="left:827px;top:547px;width:217px;height:58px;padding-top:5px">Technicians within the<br>selected team</div>
<div class="call" style="left:900px;top:637px;width:358px;height:95px;padding-top:14px">You can view any routes already<br>assigned to the technician for the<br>selected date.</div>
<svg class="i" style="left:0;top:0;z-index:20" width="1920" height="827">
<path d="M808 685L893 631" stroke="#fb4f49" stroke-width="4"/><path d="M915 618L891 624 896 632 899 637z" fill="#fb4f49"/>
<path d="M1180 556L1150 616" stroke="#fb4f49" stroke-width="4"/><path d="M1140 635L1142 616 1150 619 1157 618z" fill="#fb4f49"/>
</svg>

<!-- map toolbar -->
<svg class="i" style="left:1476px;top:154px;color:#4f46e5" width="22" height="22"><use href="#search"/></svg>
<div class="t" style="left:1514px;top:155px;font-size:16px;color:#8e9ab0">Enter an address</div>
<svg class="i" style="left:1787px;top:155px" width="20" height="20" viewBox="0 0 20 20"><path d="M10 3l9 5-9 5-9-5zM1 11.500L10 16.500l9-5" fill="none" stroke="#0f172a" stroke-width="1.600" stroke-linejoin="round"/></svg>
<svg class="i" style="left:1830px;top:155px;color:#0f172a" width="20" height="20"><use href="#filter"/></svg>
<svg class="i" style="left:1871px;top:154px;color:#0f172a" width="22" height="22"><use href="#gear"/></svg>
<div class="a" style="left:1463px;top:203px;width:457px;height:7px;background:#dedede"></div>

<!-- map -->
<svg class="a" style="left:1463px;top:210px" width="457" height="617" viewBox="69 240 1371 1851" font-family="'Liberation Sans',sans-serif">
<defs>
<linearGradient id="oc" x1="0" y1="240" x2="0" y2="2091" gradientUnits="userSpaceOnUse"><stop offset="0" stop-color="#9ccffd"/><stop offset=".35" stop-color="#95cbfc"/><stop offset=".7" stop-color="#8cc4fb"/><stop offset="1" stop-color="#9bcdfc"/></linearGradient>
<linearGradient id="ld" x1="0" y1="300" x2="0" y2="2000" gradientUnits="userSpaceOnUse"><stop offset="0" stop-color="#f6f9fb"/><stop offset=".22" stop-color="#f5f9f7"/><stop offset=".3" stop-color="#eff8ec"/><stop offset=".5" stop-color="#f0f8ec"/><stop offset=".58" stop-color="#eef7ea"/><stop offset=".7" stop-color="#f6f9f9"/><stop offset="1" stop-color="#f7fafb"/></linearGradient>
<filter id="sf" x="-5%" y="-5%" width="110%" height="110%"><feTurbulence type="fractalNoise" baseFrequency=".028" numOctaves="3" seed="4" result="n"/><feDisplacementMap in="SourceGraphic" in2="n" scale="30" xChannelSelector="R" yChannelSelector="G"/><feGaussianBlur stdDeviation="1.200"/></filter>
<filter id="sat" x="0" y="0" width="100%" height="100%"><feTurbulence type="fractalNoise" baseFrequency=".11" numOctaves="4" seed="8"/><feColorMatrix values="1.300 0 0 0 -.33  .7 .6 0 0 -.28  .9 0 0 0 -.28  0 0 0 0 1"/></filter>
<g id="land">
<path d="M340 470L380 370 470 310 560 340 615 400 570 470 520 600 460 770 410 660 385 590 310 500z"/>
<path d="M190 450L260 360 360 360 330 430 240 510 195 500z"/>
<path d="M70 530L180 480 250 560 180 590 100 600 70 590z"/>
<path d="M70 610L200 600 300 590 360 700 310 760 340 800 410 860 340 900 300 950 250 1000 300 1060 240 1080 330 1190 250 1120 160 1090 110 1000 70 960z"/>
<path d="M285 760L330 750 355 810 300 810z"/>
<path d="M735 460L790 450 820 470 770 530 740 500z"/>
<path d="M910 430L990 390 1015 420 960 450z"/>
<path d="M1150 420L1190 440 1225 510 1160 460z"/>
<path d="M555 720L605 710 600 735 570 740z"/>
<path d="M220 1140L330 1110 410 1150 500 1200 440 1280 400 1350 340 1420 300 1470 340 1510 300 1450 320 1330 260 1240z"/>
<path d="M750 690L820 640 890 690 900 715 960 640 1020 530 1030 545 980 620 1090 600 1200 520 1260 560 1300 640 1440 600 1440 960 1380 900 1320 900 1280 1000 1230 1030 1180 1110 1130 1060 1070 1130 1020 1040 960 1020 960 1090 880 1000 800 950 700 950 620 970 640 880 610 840 680 810 750 800 780 770 740 760z"/>
<path d="M590 1060L640 980 760 990 850 1020 900 1110 945 1110 880 1200 860 1320 790 1350 750 1260 710 1220 700 1180 630 1170 590 1090z"/>
<path d="M920 1230L938 1225 915 1300 900 1280z"/>
<path d="M1160 1130L1210 1140 1280 1190 1440 1180 1440 1240 1300 1220 1200 1180z"/>
<path d="M1260 1290L1340 1240 1440 1250 1440 1410 1400 1360 1320 1340 1270 1350z"/>
<path d="M1300 990L1330 960 1340 1000 1300 1020z"/>
<path d="M50 1745L150 1710 290 1730 340 1640 390 1580 370 1610 360 1710 340 1770 260 1810 280 1870 370 1830 430 1820 455 1870 510 1880 490 1830 600 1730 680 1680 870 1670 950 1620 1040 1680 1130 1630 1480 1620 1480 2130 50 2130z"/>
</g>
</defs>
<rect x="69" y="240" width="1371" height="1851" fill="url(#oc)"/>
<use href="#land" fill="#a8d5fd" stroke="#a8d5fd" stroke-width="40" opacity=".55" filter="url(#sf)"/>
<use href="#land" fill="url(#ld)" filter="url(#sf)"/>
<path d="M310 1930L370 1985 520 1885 460 1900 390 1890 320 1910z" fill="#8cc4fb" filter="url(#sf)"/>
<g font-weight="bold" fill="#6d7585" font-size="38" opacity=".95">
<text x="350" y="568" textLength="215" lengthAdjust="spacingAndGlyphs">GREENLAND</text>
<text x="70" y="808" font-size="44" textLength="150" lengthAdjust="spacingAndGlyphs">ANADA</text>
<text x="1080" y="777" font-size="44" textLength="160" lengthAdjust="spacingAndGlyphs">RUSSIA</text>
<text x="795" y="958" textLength="145" lengthAdjust="spacingAndGlyphs">TURKIYE</text>
<text x="90" y="1052" textLength="135" lengthAdjust="spacingAndGlyphs">MEXICO</text>
<text x="722" y="1033" textLength="98" lengthAdjust="spacingAndGlyphs">LIBYA</text>
<text x="860" y="1040" textLength="105" lengthAdjust="spacingAndGlyphs">SAUDI</text>
<text x="850" y="1085" textLength="125" lengthAdjust="spacingAndGlyphs">ARABIA</text>
<text x="627" y="1085" textLength="82" lengthAdjust="spacingAndGlyphs">MALI</text>
<text x="1195" y="994" font-size="42" textLength="60" lengthAdjust="spacingAndGlyphs">INA</text>
<text x="1312" y="987" textLength="105" lengthAdjust="spacingAndGlyphs">JAPAN</text>
<text x="1197" y="1114" textLength="220" lengthAdjust="spacingAndGlyphs">PHILIPPINES</text>
<text x="1355" y="1187">PAPUA</text>
<text x="1300" y="1230">NEW GUINEA</text>
<text x="698" y="1238" textLength="142" lengthAdjust="spacingAndGlyphs">ANGOLA</text>
<text x="690" y="1288" textLength="150" lengthAdjust="spacingAndGlyphs">NAMIBIA</text>
<text x="255" y="1389" textLength="100" lengthAdjust="spacingAndGlyphs">CHILE</text>
<text x="215" y="1165" textLength="185" lengthAdjust="spacingAndGlyphs">COLOMBIA</text>
</g>
<g fill="#ff5a64" opacity=".45" font-size="66">
<text x="644" y="897" textLength="235" lengthAdjust="spacingAndGlyphs">EUROPE</text>
<text x="1072" y="912" textLength="130" lengthAdjust="spacingAndGlyphs">ASIA</text>
<text x="720" y="1155" textLength="185" lengthAdjust="spacingAndGlyphs">AFRICA</text>
<text x="155" y="1258" textLength="480" lengthAdjust="spacingAndGlyphs">SOUTH AMERICA</text>
<text x="1320" y="1380">OCEANIA</text>
<text x="605" y="1856" textLength="360" lengthAdjust="spacingAndGlyphs">ANTARCTICA</text>
<text x="170" y="885" textLength="245" lengthAdjust="spacingAndGlyphs">AMERICA</text>
</g>
<g fill="#5b96d8" font-style="italic" font-weight="bold" font-size="36" opacity=".9">
<text x="860" y="305" textLength="296">Arctic Ocean</text>
<text x="397" y="978" textLength="128">North</text>
<text x="262" y="1028" textLength="372">Atlantic Ocean</text>
<text x="915" y="1220" textLength="308">Indian Ocean</text>
<text x="596" y="1583" textLength="372">Southern Ocean</text>
<text x="70" y="1333" textLength="50">an</text>
</g>
<!-- markers -->
<path d="M145 825h40a22 22 0 0 1 22 22v70a22 22 0 0 1-22 22h-70a22 22 0 0 1-22-22v-70a22 22 0 0 1 22-22z" fill="#3498db" stroke="#000" stroke-width="6"/>
<rect x="125" y="860" width="42" height="38" fill="none" stroke="#000" stroke-width="6" rx="3"/>
<circle cx="185" cy="965" r="70" fill="#f5d33f" opacity=".4"/><circle cx="185" cy="965" r="54" fill="#edc43a" opacity=".9"/>
<text x="185" y="977" font-size="36" text-anchor="middle" fill="#444">19</text>
<circle cx="82" cy="910" r="60" fill="#e74c3c" stroke="#000" stroke-width="6"/>
<text x="82" y="928" font-size="52" text-anchor="middle" fill="#111">1</text>
<circle cx="290" cy="880" r="60" fill="#3498db" stroke="#000" stroke-width="6"/>
<text x="290" y="898" font-size="52" text-anchor="middle" fill="#111">1</text>
<circle cx="275" cy="960" r="60" fill="#3498db" stroke="#000" stroke-width="6"/>
<text x="275" y="978" font-size="52" text-anchor="middle" fill="#111">1</text>
<path d="M703 815h36l-18 25z" fill="#fff"/>
<circle cx="720" cy="762" r="56" fill="#b22b86" stroke="#fff" stroke-width="6"/>
<path d="M685 742h70a5 5 0 0 1 5 5v40a5 5 0 0 1-5 5h-70a5 5 0 0 1-5-5v-40a5 5 0 0 1 5-5zM705 742v-7a5 5 0 0 1 5-5h20a5 5 0 0 1 5 5v7" fill="#fff" stroke="#fff" stroke-width="2"/><rect x="680" y="763" width="80" height="5" fill="#b22b86"/><rect x="714" y="758" width="12" height="12" fill="#b22b86"/>
<rect x="242" y="1086" width="118" height="118" rx="22" fill="#3498db" stroke="#fff" stroke-width="6"/>
<path d="M280 1202h40l-20 24z" fill="#fff"/>
<path d="M270 1144l31-30 31 30M281 1136v35h40v-35" fill="none" stroke="#fff" stroke-width="8"/><rect x="292" y="1145" width="18" height="17" fill="none" stroke="#fff" stroke-width="6"/>
<circle cx="675" cy="1160" r="70" fill="#7ccb58" opacity=".4"/><circle cx="675" cy="1160" r="52" fill="#79c957"/>
<text x="675" y="1173" font-size="36" text-anchor="middle" fill="#333">2</text>
<path d="M1030 980h130l20 15v120l-25 8h-20l-20 8-20-8h-50l-20-15v-115z" fill="#000"/>
<circle cx="1108" cy="1012" r="55" fill="#b22b86" stroke="#fff" stroke-width="5"/>
<path d="M1150 1040l12 25-6 25" stroke="#e67e22" stroke-width="5" fill="none"/>
<path d="M1040 990h92l8 8" stroke="#fff" stroke-width="5" fill="none"/>
<rect x="1028" y="990" width="118" height="118" rx="16" fill="#e74c3c" stroke="#000" stroke-width="7"/>
<rect x="1064" y="1021" width="44" height="42" rx="4" fill="none" stroke="#000" stroke-width="6"/>
<!-- draw controls -->
<rect x="1290" y="262" width="110" height="328" rx="8" fill="#fff" stroke="#6f8aa8" stroke-width="4"/>
<path d="M1292 370h106M1292 478h106" stroke="#ccc" stroke-width="3"/>
<path d="M1344 295l22 16-8 24h-28l-8-24z" fill="#333"/><rect x="1326" y="405" width="37" height="36" fill="#333"/><circle cx="1344" cy="530" r="20" fill="#333"/>
<rect x="1288" y="640" width="112" height="112" rx="8" fill="#f2f2f2" stroke="#c8c8c8" stroke-width="4"/>
<path d="M1325 677h38M1337 677v-8h14v8M1329 677v32h30v-32M1337 684v20M1344 684v20M1351 684v20" fill="none" stroke="#333" stroke-width="3.500"/>
<rect x="1287" y="1830" width="113" height="222" rx="8" fill="#fff" stroke="#bdbdbd" stroke-width="5"/>
<path d="M1289 1939h109" stroke="#c8c8c8" stroke-width="3"/>
<path d="M1324 1886h43M1345.500 1865v43M1324 1994h43" stroke="#111" stroke-width="6"/>
<clipPath id="thc"><rect x="95" y="1918" width="150" height="147" rx="10"/></clipPath>
<g clip-path="url(#thc)"><rect x="95" y="1918" width="150" height="147" filter="url(#sat)"/>
<path d="M112 2010l10-20 15-15-2 20 5 20-15 10-15-5z" fill="#12303a"/></g>
<rect x="95" y="1918" width="150" height="147" rx="10" fill="none" stroke="#5b7a99" stroke-width="5"/>
<rect x="69" y="2083" width="1371" height="8" fill="#e4e4e4"/>
<path d="M679 240v1851M69 1159h1371" stroke="#fff" stroke-width="1.500" opacity=".12"/>
</svg>
</body></html>
